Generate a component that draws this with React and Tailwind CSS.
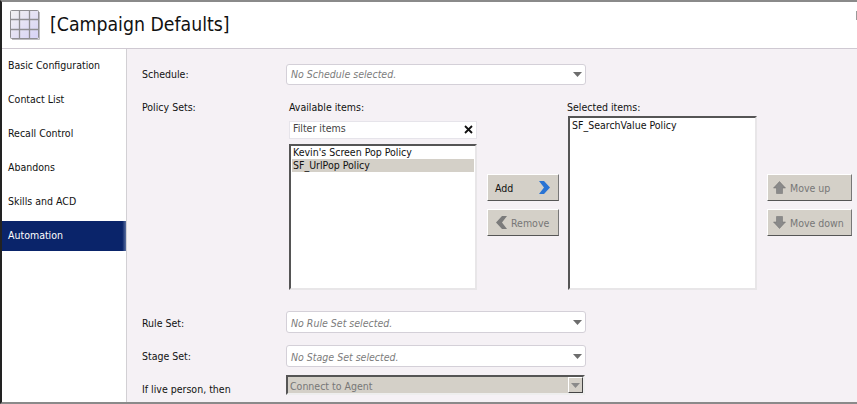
const Caret = ({ color = '#6d6d6d' }) => (
  <svg width="9" height="5" viewBox="0 0 9 5" className="shrink-0">
    <path d="M0 0h9L4.500 5z" fill={color} />
  </svg>
);

const NAV = ['Basic Configuration', 'Contact List', 'Recall Control', 'Abandons', 'Skills and ACD', 'Automation'];

function GridIcon() {
  return (
    <svg width="30" height="30" viewBox="0 0 30 30" className="shrink-0">
      <defs>
        <linearGradient id="grid" x1="0" y1="0" x2="1" y2="1">
          <stop offset="0" stopColor="#f2f1f2" />
          <stop offset="1" stopColor="#d6d2f6" />
        </linearGradient>
      </defs>
      <rect x="0.500" y="0.500" width="28" height="28" rx="1" fill="url(#grid)" stroke="#8f8e92" />
      <path d="M9.500 1v27M19.500 1v27M1 9.500h27M1 19.500h27" stroke="#8f8e92" strokeWidth="1.300" fill="none" />
      <path d="M29.500 2v27.500H2" stroke="#bdbcc0" fill="none" />
    </svg>
  );
}

function Combo({ text, className = '' }) {
  return (
    <div className={`ml-[144px] w-[300px] flex items-center justify-between rounded-[3px] border border-[#d4d0d8] bg-white pl-[4px] pr-[3px] ${className}`}>
      <span className="italic text-[#7c7c7c]">{text}</span>
      <Caret />
    </div>
  );
}

function Field({ label, children, className = '', labelClass = '' }) {
  return (
    <div className={`relative flex items-center ${className}`}>
      <span className={`absolute left-0 text-[#111] ${labelClass}`}>{label}</span>
      {children}
    </div>
  );
}

function Btn({ children, muted, className = '' }) {
  return (
    <div className={`h-[27px] flex items-center border border-t-white border-l-white border-r-[#777] border-b-[#555] bg-[#d4d0c8] ${muted ? 'text-[#777]' : 'text-[#111]'} ${className}`}>
      {children}
    </div>
  );
}

export default function App() {
  return (
    <div className="relative w-[857px] h-[404px] overflow-hidden flex flex-col border-t-2 border-b-2 border-l-2 border-t-[#8a8a8a] border-b-[#8a8a8a] border-l-[#222] bg-white text-[10.5px] leading-[14px] font-['DejaVu_Sans_Condensed','DejaVu_Sans',sans-serif]">
      <div className="absolute right-0 top-[9px] w-px h-[9px] bg-[#9a9a9a]" />
      <header className="h-[47px] shrink-0 flex items-center gap-[10px] pl-[8px] border-b border-[#cfc9d2]">
        <GridIcon />
        <h1 className="text-[19.3px] leading-[28px] text-[#111] mt-[-1px]">[Campaign Defaults]</h1>
      </header>
      <div className="flex-1 flex min-h-0">
        <nav className="w-[125px] shrink-0 flex flex-col gap-[4px] pt-[1px] border-r border-[#d2d0d4]">
          {NAV.map((item) => (
            <div
              key={item}
              className={item === 'Automation'
                ? 'h-[30px] flex items-center pl-[6px] pb-[2px] text-white bg-[linear-gradient(to_right,#0a246a_97%,#5a6f9f)] mt-[1px]'
                : 'h-[30px] flex items-center pl-[6px] text-[#111]'}
            >
              {item}
            </div>
          ))}
        </nav>
        <main className="flex-1 min-w-0 bg-[#f5f1f5] pl-[15px] pt-[15px] flex flex-col">
          <Field label="Schedule:" labelClass="-translate-y-px">
            <Combo text="No Schedule selected." className="h-[21px] [&>span]:-translate-y-px" />
          </Field>
          <div className="relative mt-[15px] h-[190px] flex">
            <span className="absolute left-0 top-0 text-[#111]">Policy Sets:</span>
            <div className="ml-[147px] w-[188px] flex flex-col">
              <span className="h-[16px] text-[#111]">Available items:</span>
              <div className="mt-[5px] h-[18px] flex justify-between bg-white border border-[#e6e4ea] pl-[3px] pr-[3px] text-[#444]">
                <span className="-translate-y-px">Filter items</span>
                <svg width="9" height="9" viewBox="0 0 9 9" className="mt-[3px]"><path d="M1 1l7 7M8 1L1 8" stroke="#111" strokeWidth="1.800" /></svg>
              </div>
              <div className="mt-[5px] flex-1 bg-white border-2 border-t-[#555] border-l-[#555] border-r-[#e8e6e8] border-b-[#e8e6e8] text-[#111] px-[1px]">
                <div className="h-[13px] leading-[13px] pl-[1px]">Kevin's Screen Pop Policy</div>
                <div className="h-[13px] leading-[13px] pl-[1px] bg-[#d4d0c8]">SF_UrlPop Policy</div>
              </div>
            </div>
            <div className="ml-[10px] w-[72px] pt-[74px] flex flex-col gap-[8px]">
              <Btn className="justify-between pl-[7px] pr-[8px]">
                <span>Add</span>
                <svg width="12" height="13" viewBox="0 0 12 13"><path d="M1 0h5l6 6.500L6 13H1l5-6.500z" fill="#2a74d4" /></svg>
              </Btn>
              <Btn muted className="gap-[3px] pl-[8px]">
                <svg width="12" height="13" viewBox="0 0 12 13"><path d="M11 0H6L0 6.500 6 13h5L6 6.500z" fill="#7b7b7b" /></svg>
                <span>Remove</span>
              </Btn>
            </div>
            <div className="ml-[9px] w-[189px] flex flex-col">
              <span className="h-[16px] text-[#111] ml-[-1px]">Selected items:</span>
              <div className="flex-1 bg-white border-2 border-t-[#555] border-l-[#555] border-r-[#e8e6e8] border-b-[#e8e6e8] text-[#111] pl-[2px]">
                SF_SearchValue Policy
              </div>
            </div>
            <div className="ml-[10px] w-[85px] pt-[74px] flex flex-col gap-[8px]">
              <Btn muted className="gap-[4px] pl-[5px]">
                <svg width="13" height="13" viewBox="0 0 13 13"><path d="M6.500 0.500L12.500 7H9.500v5.500h-6V7H0.500z" fill="#8a8a8a" stroke="#6f6f6f" strokeWidth="0.500" /></svg>
                <span>Move up</span>
              </Btn>
              <Btn muted className="gap-[4px] pl-[5px]">
                <svg width="13" height="13" viewBox="0 0 13 13"><path d="M6.500 12.500L12.500 6H9.500V0.500h-6V6H0.500z" fill="#8a8a8a" stroke="#6f6f6f" strokeWidth="0.500" /></svg>
                <span>Move down</span>
              </Btn>
            </div>
          </div>
          <Field label="Rule Set:" className="mt-[21px]" labelClass="translate-y-px">
            <Combo text="No Rule Set selected." className="h-[22px] [&>span]:translate-y-px" />
          </Field>
          <Field label="Stage Set:" className="mt-[12px]">
            <Combo text="No Stage Set selected." className="h-[22px] [&>span]:translate-y-px" />
          </Field>
          <Field label="If live person, then" className="mt-[8px]" labelClass="translate-y-[4px]">
            <div className="ml-[144px] w-[299px] h-[20px] flex items-center justify-between bg-[#d4d0c8] border-2 border-t-[#555] border-l-[#555] border-r-[#eee] border-b-[#eee] pl-[2px] text-[#777]">
              <span className="translate-y-px">Connect to Agent</span>
              <div className="w-[15px] h-[16px] flex items-center justify-center bg-[#d4d0c8] border border-t-white border-l-white border-r-[#444] border-b-[#444]">
                <Caret color="#8a8a8a" />
              </div>
            </div>
          </Field>
        </main>
      </div>
    </div>
  );
}
